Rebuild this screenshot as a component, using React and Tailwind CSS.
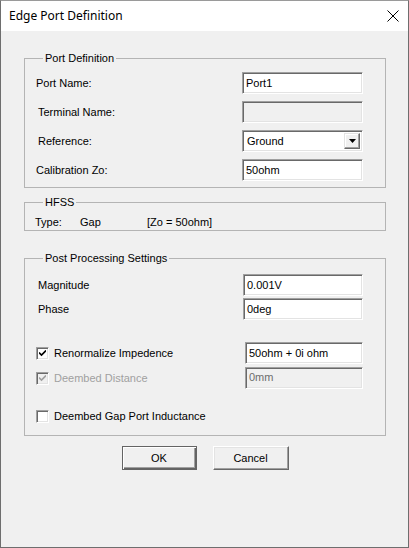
import React from 'react';

const sunken = "border border-t-[#a0a0a0] border-l-[#a0a0a0] border-b-white border-r-white shadow-[inset_1px_1px_0_#696969,inset_-1px_-1px_0_#e3e3e3]";

function TextBox({ value, disabled, className = "" }) {
    return (
        <div className={`${sunken} h-[22px] flex items-center pl-[3px] ${disabled ? "bg-[#f0f0f0] text-[#6d6d6d]" : "bg-white text-black"} ${className}`}>
            {value}
        </div>
    );
}

function Check({ checked, disabled }) {
    return (
        <span className={`${sunken} w-[13px] h-[13px] flex items-center justify-center ${disabled ? "bg-[#f0f0f0]" : "bg-white"}`}>
            {checked && (
                <svg width="7" height="7" viewBox="0 0 7 7">
                    <path d="M0 2.5 L2.5 5 L7 0.5" fill="none" stroke={disabled ? "#a0a0a0" : "#000"} strokeWidth="1.6" />
                </svg>
            )}
        </span>
    );
}

function Group({ title, className = "", children }) {
    return (
        <fieldset className={`border border-[#b4b4b4] ml-[23px] w-[362px] px-[11px] ${className}`}>
            <legend className="ml-[7px] px-[2px] leading-[13px]">{title}</legend>
            {children}
        </fieldset>
    );
}

function Row({ label, children, labelClass = "" }) {
    return (
        <div className="flex items-center justify-between h-[22px]">
            <span className={labelClass}>{label}</span>
            {children}
        </div>
    );
}

export default function App() {
    return (
        <div className="w-[409px] h-[548px] border border-[#6e6e6e] border-t-[#9a9a9a] bg-[#f0f0f0] text-[11px] text-black font-['Liberation_Sans',Arial,sans-serif] flex flex-col">
            <div className="h-[30px] bg-white flex items-center justify-between pl-[8px] pr-[9px] shrink-0">
                <span className="text-[12px] font-['Noto_Sans',sans-serif] text-black">Edge Port Definition</span>
                <svg width="12" height="12" viewBox="0 0 12 12">
                    <path d="M0.5 0.5 L11.5 11.5 M11.5 0.5 L0.5 11.5" stroke="#000" strokeWidth="1" />
                </svg>
            </div>

            <div className="flex flex-col pt-[21px]">
                <Group title="Port Definition" className="pt-[7px] pb-[6px]">
                    <div className="flex flex-col gap-[7px] pr-[11px]">
                        <Row label="Port Name:">
                            <TextBox value="Port1" className="w-[121px]" />
                        </Row>
                        <Row label="Terminal Name:" labelClass="ml-[2px]">
                            <TextBox value="" disabled className="w-[121px]" />
                        </Row>
                        <Row label="Reference:" labelClass="ml-[2px]">
                            <div className={`${sunken} w-[121px] h-[22px] bg-white flex items-center justify-between pl-[4px] pr-[2px]`}>
                                <span>Ground</span>
                                <span className="w-[16px] h-[16px] bg-[#f0f0f0] border border-t-[#e3e3e3] border-l-[#e3e3e3] border-b-[#696969] border-r-[#696969] shadow-[inset_-1px_-1px_0_#a0a0a0,inset_1px_1px_0_#fff] flex items-center justify-center">
                                    <svg width="7" height="4" viewBox="0 0 7 4">
                                        <path d="M0 0 H7 L3.5 4 Z" fill="#000" />
                                    </svg>
                                </span>
                            </div>
                        </Row>
                        <Row label="Calibration Zo:">
                            <TextBox value="50ohm" className="w-[121px]" />
                        </Row>
                    </div>
                </Group>

                <Group title="HFSS" className="mt-[8px] pt-[7px] pb-[1px]">
                    <div className="flex items-center leading-[13px]">
                        <span className="w-[45px] -ml-[1px]">Type:</span>
                        <span className="w-[67px]">Gap</span>
                        <span>[Zo = 50ohm]</span>
                    </div>
                </Group>

                <Group title="Post Processing Settings" className="mt-[21px] pt-[9px] pb-[12px]">
                    <div className="flex flex-col pr-[11px]">
                        <div className="flex flex-col gap-[2px]">
                            <Row label="Magnitude" labelClass="ml-[2px]">
                                <TextBox value="0.001V" className="w-[120px]" />
                            </Row>
                            <Row label="Phase" labelClass="ml-[2px]">
                                <TextBox value="0deg" className="w-[120px]" />
                            </Row>
                        </div>
                        <div className="flex items-center justify-between h-[22px] mt-[22px]">
                            <label className="flex items-center gap-[5px]">
                                <Check checked />
                                <span>Renormalize Impedence</span>
                            </label>
                            <TextBox value="50ohm + 0i ohm" className="w-[118px]" />
                        </div>
                        <div className="flex items-center justify-between h-[21px] mt-[3px]">
                            <label className="flex items-center gap-[5px] mt-[2px]">
                                <Check checked disabled />
                                <span className="text-[#a0a0a0]">Deembed Distance</span>
                            </label>
                            <TextBox value="0mm" disabled className="w-[118px] h-[21px]" />
                        </div>
                        <label className="flex items-center gap-[5px] mt-[22px] h-[13px]">
                            <Check />
                            <span>Deembed Gap Port Inductance</span>
                        </label>
                    </div>
                </Group>

                <div className="flex justify-center gap-[16px] mt-[10px] pl-[1px]">
                    <button className="w-[75px] h-[24px] border border-[#646464] bg-[#f0f0f0] shadow-[inset_1px_1px_0_#fff,inset_-1px_-1px_0_#646464,inset_-2px_-2px_0_#a0a0a0] leading-none">OK</button>
                    <button className="w-[76px] h-[24px] border border-t-white border-l-white border-b-[#696969] border-r-[#696969] bg-[#f0f0f0] shadow-[inset_-1px_-1px_0_#a0a0a0,inset_1px_1px_0_#e3e3e3] leading-none">Cancel</button>
                </div>
            </div>
        </div>
    );
}
